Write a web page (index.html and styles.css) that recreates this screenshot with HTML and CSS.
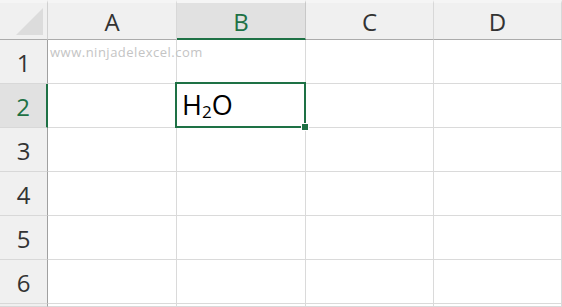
FILE: index.html
```html
<!DOCTYPE html>
<html lang="pt">
<head>
    <meta charset="UTF-8" />
    <title>H2O</title>
    <link rel="stylesheet" href="styles.css">
</head>
<body>
    <div class="sheet">
        <div class="corner"><span class="tri"></span></div>
        <div class="colhead">A</div>
        <div class="colhead sel">B</div>
        <div class="colhead">C</div>
        <div class="colhead">D</div>

        <div class="rowhead">1</div>
        <div class="cell"><span class="mark">www.ninjadelexcel.com</span></div>
        <div class="cell"></div>
        <div class="cell"></div>
        <div class="cell"></div>

        <div class="rowhead sel">2</div>
        <div class="cell"></div>
        <div class="cell active">
            <span class="value">H<sub>2</sub>O</span>
            <span class="box"></span>
            <span class="handle"></span>
        </div>
        <div class="cell"></div>
        <div class="cell"></div>

        <div class="rowhead">3</div>
        <div class="cell"></div>
        <div class="cell"></div>
        <div class="cell"></div>
        <div class="cell"></div>

        <div class="rowhead">4</div>
        <div class="cell"></div>
        <div class="cell"></div>
        <div class="cell"></div>
        <div class="cell"></div>

        <div class="rowhead">5</div>
        <div class="cell"></div>
        <div class="cell"></div>
        <div class="cell"></div>
        <div class="cell"></div>

        <div class="rowhead">6</div>
        <div class="cell"></div>
        <div class="cell"></div>
        <div class="cell"></div>
        <div class="cell"></div>

        <div class="rowhead"></div>
        <div class="cell"></div>
        <div class="cell"></div>
        <div class="cell"></div>
        <div class="cell"></div>
    </div>
</body>
</html>
```

FILE: styles.css
```css
body {
    margin: 0;
    background: #fff;
    font-family: "Segoe UI", "Open Sans", "Noto Sans", sans-serif;
    color: #333;
    overflow: hidden;
    height: 307px;
}
.sheet {
    display: grid;
    grid-template-columns: 48px 129px 129px 128px 128px;
    grid-template-rows: 40px repeat(6, 44px) 3px;
}
.corner {
    background: #f0f0f0;
    border-right: 1px solid #d0d0d0;
    border-bottom: 1px solid #ababab;
    border-top: 3px solid #f5f5f5;
    position: relative;
}
.corner .tri {
    position: absolute;
    right: 4px;
    bottom: 4px;
    width: 0;
    height: 0;
    border-left: 27px solid transparent;
    border-bottom: 27px solid #dcdcdc;
}
.colhead {
    background: #f0f0f0;
    border-top: 3px solid #f5f5f5;
    border-right: 1px solid #d8d8d8;
    border-bottom: 1px solid #ababab;
    display: flex;
    align-items: center;
    justify-content: center;
    font-size: 24px;
    padding-top: 1px;
    box-sizing: border-box;
}
.colhead.sel {
    background: #e1e1e1;
    color: #1e7145;
    border-bottom: 2px solid #1e7145;
    border-right-color: #c8c8c8;
}
.rowhead {
    background: #f0f0f0;
    border-right: 1px solid #a0a0a0;
    border-bottom: 1px solid #d8d8d8;
    display: flex;
    align-items: center;
    justify-content: center;
    font-size: 24px;
    padding-top: 2px;
    box-sizing: border-box;
}
.rowhead.sel {
    background: #e1e1e1;
    color: #1e7145;
    border-right: 2px solid #1e7145;
}
.cell {
    border-right: 1px solid #dadada;
    border-bottom: 1px solid #dadada;
    position: relative;
    min-width: 0;
}
.mark {
    position: absolute;
    left: 2px;
    top: 3px;
    font-size: 13px;
    letter-spacing: 0.5px;
    color: #c4c4c4;
    white-space: nowrap;
    z-index: 2;
}
.value {
    position: absolute;
    left: 5px;
    top: 2px;
    font-size: 27px;
    color: #000;
}
.value sub {
    font-size: 17px;
    vertical-align: -3px;
}
.box {
    position: absolute;
    left: -2px;
    top: -2px;
    right: -1px;
    bottom: -1px;
    border: 2px solid #1e7145;
}
.handle {
    position: absolute;
    right: -4px;
    bottom: -4px;
    width: 6px;
    height: 6px;
    background: #1e7145;
    border: 1px solid #fff;
    z-index: 3;
}
```
